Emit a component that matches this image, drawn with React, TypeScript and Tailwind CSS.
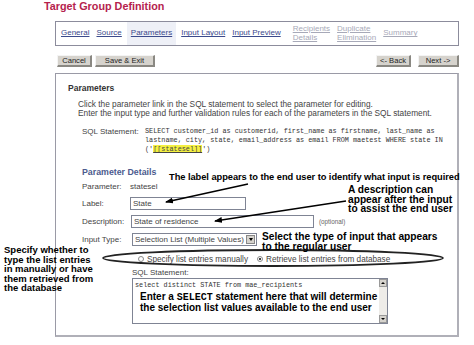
const tabs = [
  { label: "General", on: true, extra: "" },
  { label: "Source", on: true, extra: "" },
  { label: "Parameters", on: true, active: true, extra: "" },
  { label: "Input Layout", on: true, extra: "" },
  { label: "Input Preview", on: true, extra: "mr-[8px]" },
  { label: ["Recipients", "Details"], on: false, extra: "" },
  { label: ["Duplicate", "Elimination"], on: false, extra: "" },
  { label: "Summary", on: false, extra: "" },
];

const Btn = ({ children, w }: { children: React.ReactNode; w: string }) => (
  <div
    className={`${w} h-[12px] flex items-center justify-center bg-[#d6d3cd] border-r-2 border-b-2 border-[#8a8882] border-l border-t border-l-[#f4f4f4] border-t-[#f4f4f4] text-[7.6px] text-[#222] leading-none`}
  >
    {children}
  </div>
);

const Annot = ({ className, children }: { className: string; children: React.ReactNode }) => (
  <div
    className={`absolute font-bold text-black whitespace-nowrap ${className}`}
    style={{ fontFamily: '"Liberation Sans", Arial, sans-serif' }}
  >
    {children}
  </div>
);

const Radio = ({ checked }: { checked?: boolean }) => (
  <span className="w-[6px] h-[6px] rounded-full border border-[#8a8a8a] bg-white flex items-center justify-center">
    {checked && <span className="w-[2px] h-[2px] rounded-full bg-black" />}
  </span>
);

export default function App() {
  return (
    <div
      className="relative w-[474px] h-[345px] bg-white overflow-hidden text-[#333]"
      style={{ fontFamily: '"Liberation Sans", Arial, sans-serif' }}
    >
      <div className="pl-[44px] text-[10.8px] font-bold text-[#b5224d] leading-[12px] h-[12px]">
        Target Group Definition
      </div>

      {/* tab strip */}
      <div className="ml-[55px] mt-[9px] w-[404px] h-[25px] border border-[#8c8c9c] flex items-stretch pl-[3px] text-[8px] leading-[8.5px]">
        {tabs.map((t, i) => (
          <div
            key={i}
            className={`flex items-center px-[2px] mr-[3px] ${t.extra} ${t.active ? "bg-[#eef0f7] px-[4px]" : ""} ${
              t.on ? "text-[#3b4a8c] underline" : "text-[#a7a9b8] underline"
            }`}
          >
            {Array.isArray(t.label) ? (
              <div className="flex flex-col">
                {t.label.map((l) => (
                  <span key={l}>{l}</span>
                ))}
              </div>
            ) : (
              t.label
            )}
          </div>
        ))}
      </div>

      {/* button row */}
      <div className="ml-[57px] mr-[15px] mt-[9px] flex items-center justify-between">
        <div className="flex gap-[3px]">
          <Btn w="w-[35px]">Cancel</Btn>
          <Btn w="w-[60px]">Save &amp; Exit</Btn>
        </div>
        <div className="flex gap-[7px]">
          <Btn w="w-[35px]">&lt;- Back</Btn>
          <Btn w="w-[41px]">Next -&gt;</Btn>
        </div>
      </div>

      {/* main panel */}
      <div className="ml-[55px] mt-[6px] w-[404px] h-[264px] border border-[#9a9aa6] border-r-2 border-b-2 border-r-[#b0b0b8] border-b-[#b0b0b8] text-[8px] leading-[9px] text-[#444]">
        <div className="pl-[12px] pt-[10px] font-bold text-[8.5px] text-[#333]">Parameters</div>
        <div className="pl-[22px] mt-[7px] text-[8.3px]">
          <div>Click the parameter link in the SQL statement to select the parameter for editing.</div>
          <div>Enter the input type and further validation rules for each of the parameters in the SQL statement.</div>
        </div>

        <div className="pl-[26px] mt-[9px] flex">
          <div className="w-[63px] shrink-0">SQL Statement:</div>
          <div
            className="text-[6.8px] leading-[9px] text-[#333]"
            style={{ fontFamily: '"Liberation Mono", "Courier New", monospace' }}
          >
            <div>SELECT customer_id as customerid, first_name as firstname, last_name as</div>
            <div>lastname, city, state, email_address as email FROM maetest WHERE state IN</div>
            <div>
              ('<span className="bg-[#f4f040] underline text-[#444]">[[statesel]]</span>')
            </div>
          </div>
        </div>

        <div className="pl-[26px] mt-[14px] font-bold text-[8.8px] text-[#4c5b8e]">Parameter Details</div>

        <div className="pl-[26px] mt-[4px] flex items-center h-[10px]">
          <div className="w-[48px]">Parameter:</div>
          <div>statesel</div>
        </div>

        <div className="pl-[26px] mt-[6px] flex items-center h-[13px]">
          <div className="w-[48px]">Label:</div>
          <div className="w-[116px] h-[13px] border border-[#7f8494] bg-white px-[2px] flex items-center">State</div>
        </div>

        <div className="pl-[26px] mt-[5px] flex items-center h-[13px]">
          <div className="w-[49px]">Description:</div>
          <div className="w-[183px] h-[13px] border border-[#7f8494] bg-white px-[2px] flex items-center">
            State of residence
          </div>
          <div className="ml-[5px] text-[6.3px] text-[#666]">(optional)</div>
        </div>

        <div className="pl-[26px] mt-[5px] flex items-center h-[13px]">
          <div className="w-[50px]">Input Type:</div>
          <div className="w-[125px] h-[13px] border border-[#7f8494] bg-white pl-[2px] flex items-center justify-between">
            <span>Selection List (Multiple Values)</span>
            <span className="w-[9px] h-[9px] mr-[1px] bg-[#d6d3cd] border border-[#888] flex items-center justify-center">
              <span className="w-0 h-0 border-l-[2.5px] border-r-[2.5px] border-t-[3px] border-l-transparent border-r-transparent border-t-black" />
            </span>
          </div>
        </div>

        <div className="pl-[82px] mt-[8px] flex items-center h-[10px] gap-[3px] text-[8.2px]">
          <Radio />
          <span>Specify list entries manually</span>
          <span className="w-[3px]" />
          <Radio checked />
          <span>Retrieve list entries from database</span>
        </div>

        <div className="pl-[76px] mt-[4px]">SQL Statement:</div>
        <div className="ml-[76px] mt-[1px] w-[256px] h-[46px] border border-[#7f8494] bg-white flex">
          <div
            className="flex-1 pl-[2px] pt-[2px] text-[6.8px] leading-[8px] text-[#333]"
            style={{ fontFamily: '"Liberation Mono", "Courier New", monospace' }}
          >
            select distinct STATE from mae_recipients
          </div>
          <div className="w-[8px] bg-[#eeece8] flex flex-col justify-between">
            <span className="h-[8px] bg-[#d6d3cd] border border-[#999] flex items-center justify-center">
              <span className="w-0 h-0 border-l-[2px] border-r-[2px] border-b-[2.5px] border-l-transparent border-r-transparent border-b-black" />
            </span>
            <span className="h-[8px] bg-[#d6d3cd] border border-[#999] flex items-center justify-center">
              <span className="w-0 h-0 border-l-[2px] border-r-[2px] border-t-[2.5px] border-l-transparent border-r-transparent border-t-black" />
            </span>
          </div>
        </div>
      </div>

      {/* callout drawing */}
      <svg className="absolute left-0 top-0 pointer-events-none" width="474" height="345" viewBox="0 0 474 345">
        <defs>
          <marker id="ah" markerWidth="8" markerHeight="6" refX="7" refY="3" orient="auto" markerUnits="userSpaceOnUse">
            <path d="M0 0 L8 3 L0 6 Z" fill="#000" />
          </marker>
        </defs>
        <line x1="248" y1="184" x2="166" y2="202" stroke="#000" strokeWidth="1.6" markerEnd="url(#ah)" />
        <line x1="346" y1="201" x2="215" y2="221" stroke="#000" strokeWidth="1.6" markerEnd="url(#ah)" />
        <ellipse cx="273" cy="258" rx="170" ry="8" fill="none" stroke="#222" strokeWidth="1.8" />
      </svg>

      <Annot className="left-[169px] top-[172px] text-[9.3px] leading-[10px] tracking-[-0.05px]">
        The label appears to the end user to identify what input is required
      </Annot>
      <Annot className="left-[348px] top-[185px] text-[10.2px] leading-[9.5px]">
        A description can
        <br />
        appear after the input
        <br />
        to assist the end user
      </Annot>
      <Annot className="left-[262px] top-[232px] text-[10.2px] leading-[9.5px]">
        Select the type of input that appears
        <br />
        to the regular user
      </Annot>
      <Annot className="left-[4px] top-[245px] text-[9.5px] leading-[9.5px]">
        Specify whether to
        <br />
        type the list entries
        <br />
        in manually or have
        <br />
        them retrieved from
        <br />
        the database
      </Annot>
      <Annot className="left-[140px] top-[292px] text-[10px] leading-[10px]">
        Enter a <span style={{ fontFamily: '"Liberation Mono", monospace' }}>SELECT</span> statement here that will determine
        <br />
        the selection list values available to the end user
      </Annot>
    </div>
  );
}
